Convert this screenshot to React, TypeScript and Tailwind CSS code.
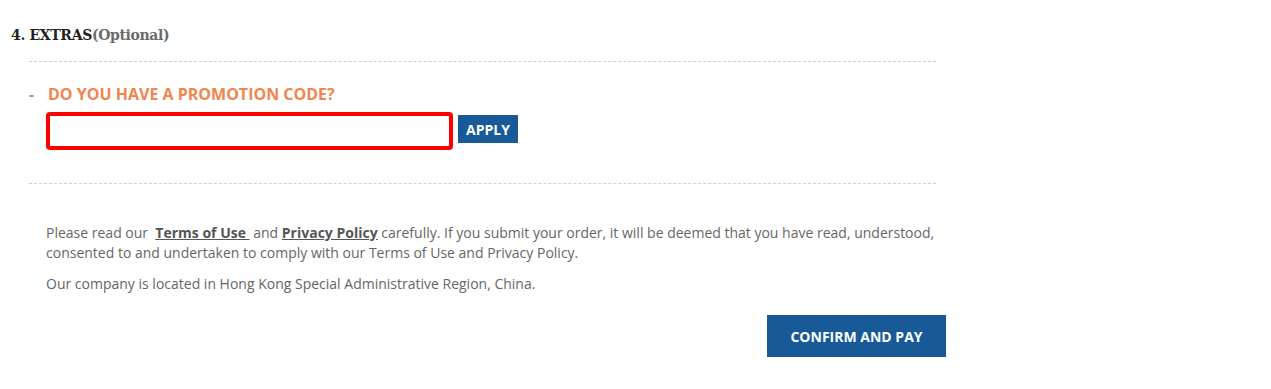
export default function App() {
  return (
    <div className="min-h-[389px] w-[1271px] bg-white font-['Open_Sans',sans-serif] text-[14px] text-[#666]">
      <div className="pl-[11px] pt-[24px]">
        <h2 className="font-['DejaVu_Serif',serif] text-[14px] font-bold leading-[22px] tracking-[-0.35px] text-[#222]">
          4. EXTRAS<span className="text-[#6b6b6b]">(Optional)</span>
        </h2>
      </div>

      <div className="ml-[29px] mt-[15px] w-[907px] border-t border-dashed border-[#cfcfcf]" />

      <div className="ml-[29px] pt-[21px]">
        <div className="flex items-center text-[16px] font-bold leading-[22px] text-[#f0854f]">
          <span className="w-[19px]">-</span>
          <span>DO YOU HAVE A PROMOTION CODE?</span>
        </div>
        <div className="mt-[7px] flex items-start pl-[17px]">
          <input
            type="text"
            className="h-[38px] w-[407px] rounded-[4px] border-[4px] border-[#ff0000] bg-white px-2 outline-none"
          />
          <button
            type="button"
            className="ml-[5px] mt-[3px] h-[28px] w-[60px] bg-[#175a97] text-[14px] font-bold text-white"
          >
            APPLY
          </button>
        </div>
      </div>

      <div className="ml-[29px] mt-[33px] w-[907px] border-t border-dashed border-[#cfcfcf]" />

      <div className="ml-[46px] mt-[39px] w-[900px]">
        <p className="leading-[20px]">
          Please read our&nbsp;{" "}
          <a className="font-bold text-[#555] underline">Terms of Use&nbsp;</a> and{" "}
          <a className="font-bold text-[#555] underline">Privacy Policy</a> carefully. If you submit your order, it
          will be deemed that you have read, understood, consented to and undertaken to comply with our Terms of Use
          and Privacy Policy.
        </p>
        <p className="mt-[11px] leading-[20px]">Our company is located in Hong Kong Special Administrative Region, China.</p>
        <div className="mt-[21px] flex justify-end">
          <button
            type="button"
            className="h-[42px] w-[179px] bg-[#175a97] text-[14px] font-bold text-white"
          >
            CONFIRM AND PAY
          </button>
        </div>
      </div>
    </div>
  )
}
